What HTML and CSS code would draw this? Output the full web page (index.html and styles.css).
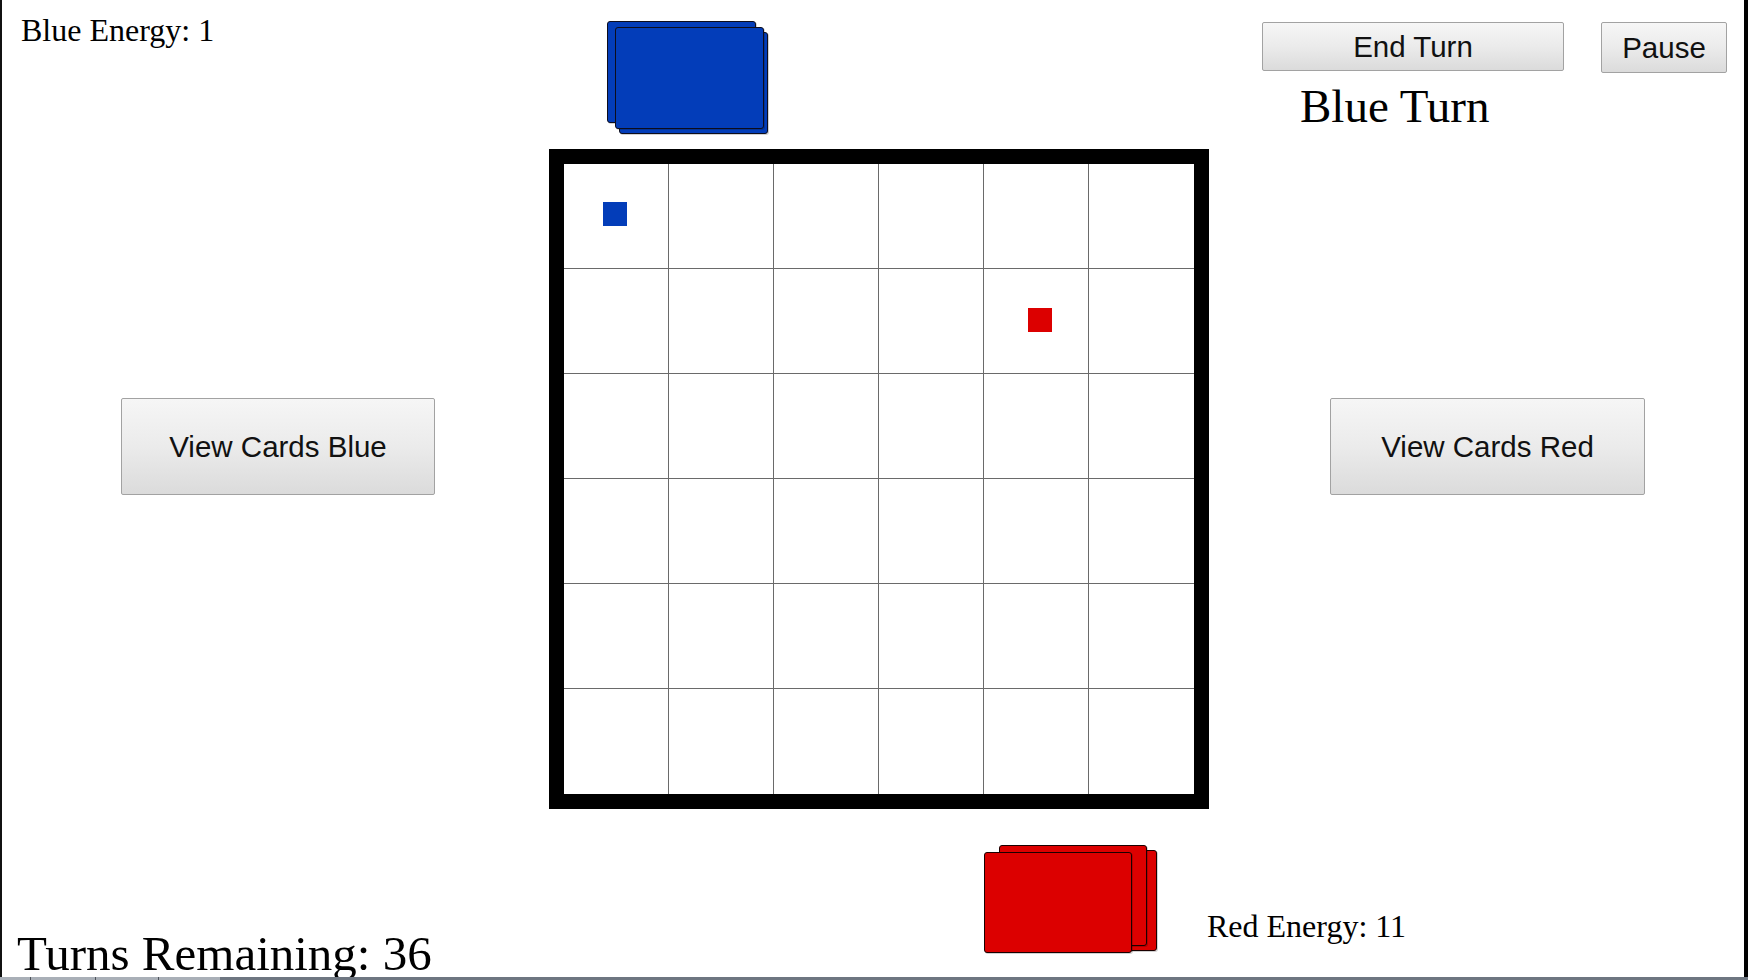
FILE: index.html
```html
<!DOCTYPE html>
<html lang="en">
<head>
<meta charset="utf-8">
<title>Card Board Game</title>
<link rel="stylesheet" href="styles.css">
</head>
<body>
<div class="screen">
  <div class="app">
    <div class="top-left">
      <p class="energy">Blue Energy: 1</p>
    </div>
    <div class="top-center">
      <div class="hand hand-blue">
        <div class="card card-blue b1"></div>
        <div class="card card-blue b2"></div>
        <div class="card card-blue b3"></div>
      </div>
    </div>
    <div class="top-right">
      <div class="turn-col">
        <button class="btn btn-end">End Turn</button>
        <p class="turn-label">Blue Turn</p>
      </div>
      <button class="btn btn-pause">Pause</button>
    </div>

    <div class="mid-left">
      <button class="btn btn-view">View Cards Blue</button>
    </div>
    <div class="board">
      <div class="cell"><div class="piece piece-blue"></div></div>
      <div class="cell"></div><div class="cell"></div><div class="cell"></div><div class="cell"></div><div class="cell"></div>
      <div class="cell"></div><div class="cell"></div><div class="cell"></div><div class="cell"></div>
      <div class="cell"><div class="piece piece-red"></div></div>
      <div class="cell"></div>
      <div class="cell"></div><div class="cell"></div><div class="cell"></div><div class="cell"></div><div class="cell"></div><div class="cell"></div>
      <div class="cell"></div><div class="cell"></div><div class="cell"></div><div class="cell"></div><div class="cell"></div><div class="cell"></div>
      <div class="cell"></div><div class="cell"></div><div class="cell"></div><div class="cell"></div><div class="cell"></div><div class="cell"></div>
      <div class="cell"></div><div class="cell"></div><div class="cell"></div><div class="cell"></div><div class="cell"></div><div class="cell"></div>
    </div>
    <div class="mid-right">
      <button class="btn btn-view btn-view-red">View Cards Red</button>
    </div>

    <div class="bottom">
      <div class="turns-box">
        <p class="turns">Turns Remaining: 36</p>
      </div>
      <div class="hand hand-red">
        <div class="card card-red r3"></div>
        <div class="card card-red r2"></div>
        <div class="card card-red r1"></div>
      </div>
      <p class="energy energy-red">Red Energy: 11</p>
    </div>
  </div>
  <div class="taskbar">
    <div class="tb-item tb-a"></div>
    <div class="tb-item tb-b"></div>
    <div class="tb-item tb-c"></div>
    <div class="tb-item tb-d"></div>
    <div class="tb-rest"></div>
  </div>
</div>
</body>
</html>
```

FILE: styles.css
```css
html, body {
  margin: 0;
  padding: 0;
  background: #ffffff;
}

.screen {
  width: 1748px;
  height: 980px;
  overflow: hidden;
  background: #ffffff;
}

.app {
  box-sizing: border-box;
  width: 1748px;
  height: 977px;
  border-left: 2px solid #111;
  border-right: 4px solid #000;
  overflow: hidden;
  display: grid;
  grid-template-columns: 547px 660px 535px;
  grid-template-rows: 149px 660px 168px;
  font-family: "Liberation Serif", "Times New Roman", serif;
  color: #000;
}

p {
  margin: 0;
}

/* ---------- text ---------- */
.energy {
  font-size: 32px;
  line-height: 36px;
  white-space: nowrap;
}

.top-left {
  padding: 12px 0 0 19px;
}

.turn-label {
  font-size: 47px;
  line-height: 52px;
  margin-top: 9px;
  padding-left: 38px;
  white-space: nowrap;
}

.turns {
  font-size: 49px;
  line-height: 56px;
  white-space: nowrap;
}

/* ---------- buttons ---------- */
.btn {
  appearance: none;
  box-sizing: border-box;
  margin: 0;
  padding: 0;
  font-family: "Liberation Sans", Arial, sans-serif;
  font-size: 29.5px;
  color: #111;
  border: 1px solid #a2a2a2;
  border-radius: 2px;
  background: linear-gradient(to bottom, #f6f6f6 0%, #ebebeb 50%, #dbdbdb 100%);
  white-space: nowrap;
}

.top-right {
  display: flex;
  align-items: flex-start;
  padding-top: 22px;
}

.turn-col {
  display: flex;
  flex-direction: column;
  margin-left: 53px;
}

.btn-end {
  width: 302px;
  height: 49px;
}

.btn-pause {
  width: 126px;
  height: 51px;
  margin-left: 37px;
}

.mid-left {
  padding: 249px 0 0 119px;
}

.mid-right {
  padding: 249px 0 0 121px;
}

.btn-view {
  width: 314px;
  height: 97px;
}

.btn-view-red {
  width: 315px;
}

/* ---------- board ---------- */
.board {
  box-sizing: border-box;
  width: 660px;
  height: 660px;
  border: 15px solid #000;
  background: #fff;
  display: grid;
  grid-template-columns: repeat(6, 105px);
  grid-template-rows: repeat(6, 105px);
}

.cell {
  box-sizing: border-box;
  border-right: 1px solid #6a6a6a;
  border-bottom: 1px solid #6a6a6a;
  display: flex;
  align-items: center;
  justify-content: center;
}

.cell:nth-child(6n) {
  border-right: none;
}

.cell:nth-child(n+31) {
  border-bottom: none;
}

.piece {
  width: 24px;
  height: 24px;
}

.piece-blue {
  background: #033db9;
  margin: -5px 3px 0 0;
}

.piece-red {
  background: #dc0000;
  margin: -3px 0 0 7px;
}

/* ---------- card hands ---------- */
.hand {
  position: relative;
  flex: 0 0 auto;
}

.card {
  position: absolute;
  box-sizing: border-box;
  border: 1px solid #0d0d1c;
  border-radius: 3px;
  box-shadow: 1px 1px 0 rgba(0, 0, 0, 0.18);
}

.card-blue {
  width: 149px;
  height: 102px;
  background: #033db9;
}

.hand-blue {
  width: 161px;
  height: 113px;
  margin: 21px 0 0 58px;
}

.b1 { left: 0; top: 0; }
.b2 { left: 12px; top: 11px; }
.b3 { left: 8px; top: 6px; }

.card-red {
  width: 148px;
  height: 101px;
  background: #dc0000;
  border-color: #1a0000;
}

.hand-red {
  width: 173px;
  height: 108px;
  margin: 36px 0 0 435px;
}

.r3 { left: 25px; top: 5px; }
.r2 { left: 15px; top: 0; }
.r1 { left: 0; top: 7px; }

/* ---------- bottom row ---------- */
.bottom {
  grid-column: 1 / -1;
  display: flex;
  align-items: flex-start;
}

.turns-box {
  flex: 0 0 547px;
  box-sizing: border-box;
  padding: 117px 0 0 15px;
}

.energy-red {
  margin: 99px 0 0 50px;
}

/* ---------- taskbar strip ---------- */
.taskbar {
  display: flex;
  height: 3px;
  background: #6e7681;
}

.tb-item {
  height: 3px;
  background: #a9afb7;
  border-left: 1px solid #4d535b;
  box-sizing: border-box;
}

.tb-a { width: 30px; border-left: none; }
.tb-b { width: 65px; }
.tb-c { width: 63px; }
.tb-d { width: 62px; }

.tb-rest {
  flex: 1;
  height: 3px;
  background: #6e7681;
}
```
